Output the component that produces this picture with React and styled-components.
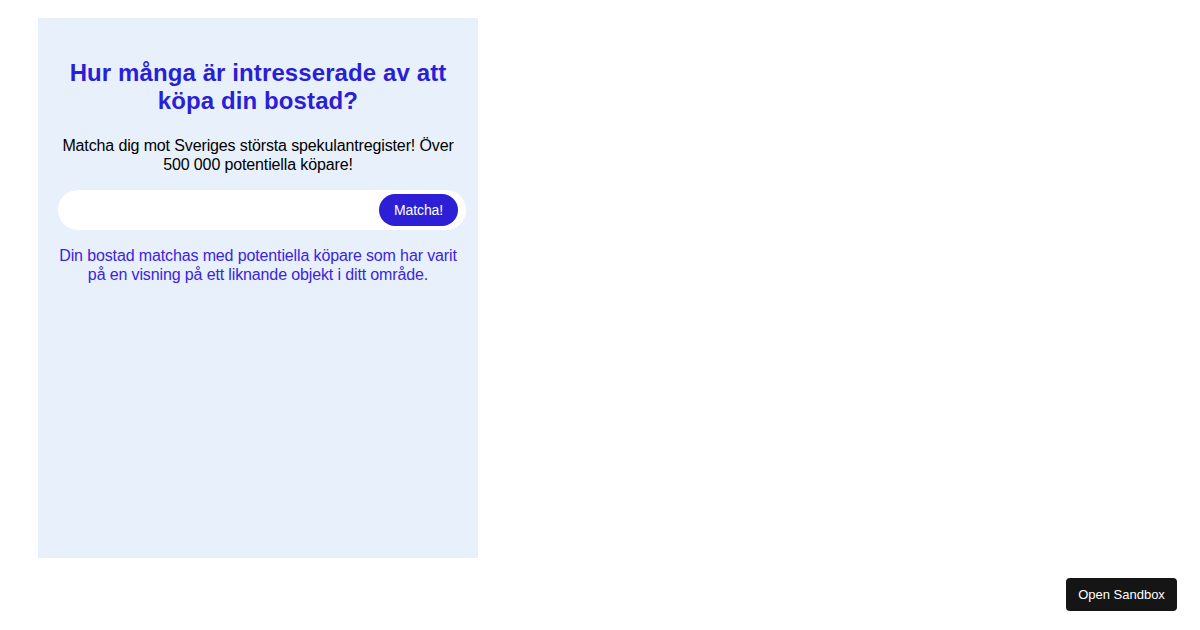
import React from "react";
import styled, { createGlobalStyle } from "styled-components";

const Global = createGlobalStyle`
  html, body { margin: 0; padding: 0; background: #ffffff; }
  body { font-family: "Liberation Sans", Arial, sans-serif; }
  * { box-sizing: border-box; }
`;

const Page = styled.div`
  padding: 18px 0 0 38px;
  min-height: 630px;
`;

const Panel = styled.section`
  width: 440px;
  height: 540px;
  background: #e8f0fc;
  padding: 41px 20px 0 20px;
  display: flex;
  flex-direction: column;
  align-items: center;
`;

const Title = styled.h2`
  margin: 0;
  font-size: 24px;
  line-height: 28px;
  font-weight: 700;
  letter-spacing: 0.1px;
  color: #2a1fd6;
  text-align: center;
`;

const Lead = styled.p`
  margin: 21px 0 0;
  font-size: 16px;
  line-height: 19px;
  letter-spacing: -0.13px;
  color: #000000;
  text-align: center;
`;

const SearchBar = styled.form`
  margin-top: 16px;
  align-self: flex-start;
  width: 408px;
  height: 40px;
  background: #ffffff;
  border-radius: 20px;
  display: flex;
  align-items: center;
  padding: 0 8px 0 16px;
`;

const Input = styled.input`
  flex: 1;
  border: none;
  outline: none;
  background: transparent;
  font-family: inherit;
  font-size: 14px;
  height: 100%;
`;

const Button = styled.button`
  width: 79px;
  height: 32px;
  border: none;
  border-radius: 16px;
  background: #2d1fd6;
  color: #ffffff;
  font-family: inherit;
  font-size: 14px;
  letter-spacing: -0.1px;
  cursor: pointer;
`;

const Note = styled.p`
  margin: 16px 0 0;
  font-size: 16px;
  line-height: 19px;
  letter-spacing: -0.13px;
  color: #3b24e0;
  text-align: center;
`;

const SandboxButton = styled.a`
  position: fixed;
  right: 23px;
  bottom: 19px;
  width: 111px;
  height: 33px;
  background: #151515;
  color: #ffffff;
  border-radius: 4px;
  font-size: 13px;
  display: flex;
  align-items: center;
  justify-content: center;
  text-decoration: none;
`;

export default function App() {
  return (
    <>
      <Global />
      <Page>
        <Panel>
          <Title>Hur många är intresserade av att köpa din bostad?</Title>
          <Lead>
            Matcha dig mot Sveriges största spekulantregister! Över 500 000
            potentiella köpare!
          </Lead>
          <SearchBar onSubmit={(e) => e.preventDefault()}>
            <Input type="text" aria-label="Adress" />
            <Button type="submit">Matcha!</Button>
          </SearchBar>
          <Note>
            Din bostad matchas med potentiella köpare som har varit på en
            visning på ett liknande objekt i ditt område.
          </Note>
        </Panel>
      </Page>
      <SandboxButton href="#">Open Sandbox</SandboxButton>
    </>
  );
}
